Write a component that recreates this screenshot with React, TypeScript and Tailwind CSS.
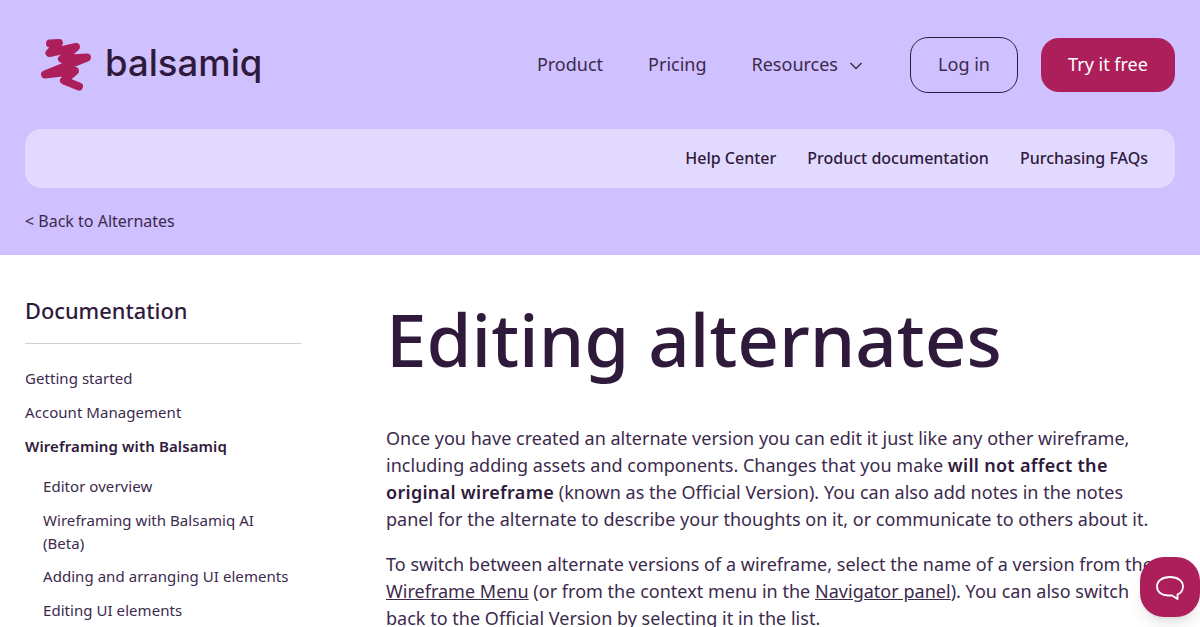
import React from 'react';

const font = { fontFamily: '"Noto Sans", sans-serif' };

function Logo() {
  return (
    <div className="flex items-center gap-[10px]">
      <svg width="60" height="60" viewBox="0 0 60 60" className="shrink-0">
        <path
          d="M15 8.500 L24 8 L14.500 18 L41 12 L27 24 L52 22.500 L10 39.500 L40 36 L29 45.500 L44 51.500"
          fill="none"
          stroke="#ad1f5a"
          strokeWidth="8"
          strokeLinecap="round"
          strokeLinejoin="round"
        />
      </svg>
      <span className="pb-[3px] text-[36.500px] leading-none font-medium text-[#2f1a3c]" style={{ fontFamily: 'Inter, sans-serif' }}>
        balsamiq
      </span>
    </div>
  );
}

export default function App() {
  return (
    <div className="relative h-[627px] w-[1200px] overflow-hidden bg-white text-[#2f1a3c]" style={font}>
      <header className="h-[255px] bg-[#cfc0ff] px-[25px]">
        <div className="flex h-[129px] items-center justify-between pl-[10px]">
          <Logo />
          <nav className="flex items-center">
            <a className="mr-[45px] text-[18px] text-[#3c2a4d]">Product</a>
            <a className="mr-[45px] text-[18px] text-[#3c2a4d]">Pricing</a>
            <a className="mr-[47px] flex items-center text-[18px] text-[#3c2a4d]">
              Resources
              <svg width="14" height="8" viewBox="0 0 14 8" className="ml-[11px] mt-[2px]">
                <path d="M1.500 1 L7 6.500 L12.500 1" fill="none" stroke="#3c2a4d" strokeWidth="1.500" />
              </svg>
            </a>
            <a className="mr-[23px] flex h-[56px] w-[108px] items-center justify-center rounded-[18px] border border-[#2f1a3c] text-[18px] text-[#3c2a4d]">
              Log in
            </a>
            <a className="flex h-[54px] w-[134px] items-center justify-center rounded-[18px] bg-[#ad1f5a] text-[18px] text-white">
              Try it free
            </a>
          </nav>
        </div>
        <div className="flex h-[59px] items-center justify-end gap-[31px] rounded-[16px] bg-[#e2d9ff] pb-[2px] pr-[27px] text-[16px] font-medium text-[#2f1a3c]">
          <a>Help Center</a>
          <a>Product documentation</a>
          <a>Purchasing FAQs</a>
        </div>
        <a className="mt-[21px] block text-[16px] leading-[24px] text-[#3c2a4d]">&lt; Back to Alternates</a>
      </header>

      <div className="flex px-[25px]">
        <aside className="w-[276px] shrink-0 pt-[42px]">
          <h2 className="border-b border-[#d4d0d8] pb-[18px] text-[21.800px] leading-[28px] font-medium">Documentation</h2>
          <ul className="mt-[23px] flex flex-col gap-[11px] text-[15px] leading-[23px] tracking-[0.05px] text-[#3c2a4d]">
            <li>Getting started</li>
            <li>Account Management</li>
            <li className="font-semibold tracking-[0.12px] text-[#2f1a3c]">Wireframing with Balsamiq</li>
          </ul>
          <ul className="mt-[17px] flex flex-col gap-[11px] pl-[18px] text-[15px] leading-[23px] tracking-[0.05px] text-[#3c2a4d]">
            <li>Editor overview</li>
            <li className="max-w-[230px] leading-[22.500px]">Wireframing with Balsamiq AI (Beta)</li>
            <li>Adding and arranging UI elements</li>
            <li>Editing UI elements</li>
          </ul>
        </aside>
        <main className="ml-[85px] w-[770px] pt-[39px]">
          <h1 className="text-[72.700px] leading-[90px] font-medium text-[#2f1a3c]">Editing alternates</h1>
          <p className="mt-[41px] text-[18px] leading-[27px] tracking-[0.02px] text-[#3c2a4d]">
            Once you have created an alternate version you can edit it just like any other wireframe, including adding
            assets and components. Changes that you make{' '}
            <strong className="font-semibold tracking-[0.3px] text-[#2f1a3c]">will not affect the original wireframe</strong>{' '}
            (known as the Official Version). You can also add notes in the notes panel for the alternate to describe
            your thoughts on it, or communicate to others about it.
          </p>
          <p className="mt-[18px] text-[18px] leading-[27px] tracking-[0.02px] text-[#3c2a4d]">
            To switch between alternate versions of a wireframe, select the name of a version from the{' '}
            <a className="underline">Wireframe Menu</a> (or from the context menu in the{' '}
            <a className="underline">Navigator panel</a>). You can also switch back to the Official Version by
            selecting it in the list.
          </p>
        </main>
      </div>

      <button className="absolute right-0 top-[557px] flex h-[60px] w-[60px] items-center justify-center rounded-[24px] bg-[#ad1f5a] shadow-lg">
        <svg width="30" height="30" viewBox="0 0 30 30">
          <path
            d="M15 5 C7 5 2 9 2 14.500 C2 20 6.500 23.500 13 23.500 L17 23.500 L22.500 27 L22.500 22.500 C26 21 28 18 28 14.500 C28 9 23 5 15 5 Z"
            fill="none"
            stroke="white"
            strokeWidth="1.800"
            strokeLinejoin="round"
          />
        </svg>
      </button>
    </div>
  );
}
